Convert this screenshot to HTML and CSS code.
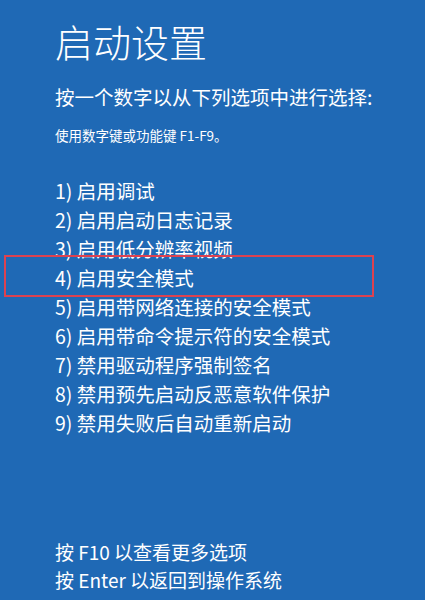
FILE: index.html
```html
<!DOCTYPE html>
<html lang="zh-CN">
  <head>
    <meta charset="UTF-8" />
    <meta name="viewport" content="width=device-width, initial-scale=1.0" />
    <title>启动设置</title>
    <link rel="stylesheet" href="styles.css">
  </head>
  <body>
    <h1 class="title">启动设置</h1>
    <p class="prompt">按一个数字以从下列选项中进行选择:</p>
    <p class="hint">使用数字键或功能键 F1-F9。</p>
    <ol class="options">
      <li>1) 启用调试</li>
      <li>2) 启用启动日志记录</li>
      <li>3) 启用低分辨率视频</li>
      <li class="marked">4) 启用安全模式</li>
      <li>5) 启用带网络连接的安全模式</li>
      <li>6) 启用带命令提示符的安全模式</li>
      <li>7) 禁用驱动程序强制签名</li>
      <li>8) 禁用预先启动反恶意软件保护</li>
      <li>9) 禁用失败后自动重新启动</li>
    </ol>
    <div class="footer">
      <p>按 F10 以查看更多选项</p>
      <p>按 Enter 以返回到操作系统</p>
    </div>
  </body>
</html>
```

FILE: styles.css
```css
html,
body {
  height: 100%;
}
body {
  margin: 0;
  padding: 17px 0 0 55px;
  box-sizing: border-box;
  background-color: #1f69b5;
  color: #fff;
  font-family: "Noto Sans CJK SC", "Noto Sans", sans-serif;
  overflow: hidden;
}
.title {
  margin: 0;
  font-size: 38px;
  font-weight: 300;
  line-height: 48px;
}
.prompt {
  margin: 18px 0 0;
  font-size: 19.5px;
  line-height: 28px;
}
.hint {
  margin: 14px 0 0;
  font-size: 13.5px;
  line-height: 20px;
}
.options {
  list-style: none;
  margin: 31px 0 0;
  padding: 0;
  font-size: 19.5px;
  line-height: 29px;
}
.marked {
  position: relative;
}
.marked::after {
  content: "";
  position: absolute;
  left: -51px;
  top: -8.5px;
  width: 366px;
  height: 38px;
  border: 2.5px solid #dd4250;
}
.footer {
  margin-top: 101px;
  font-size: 19px;
  line-height: 28px;
}
.footer p {
  margin: 0;
}
```
